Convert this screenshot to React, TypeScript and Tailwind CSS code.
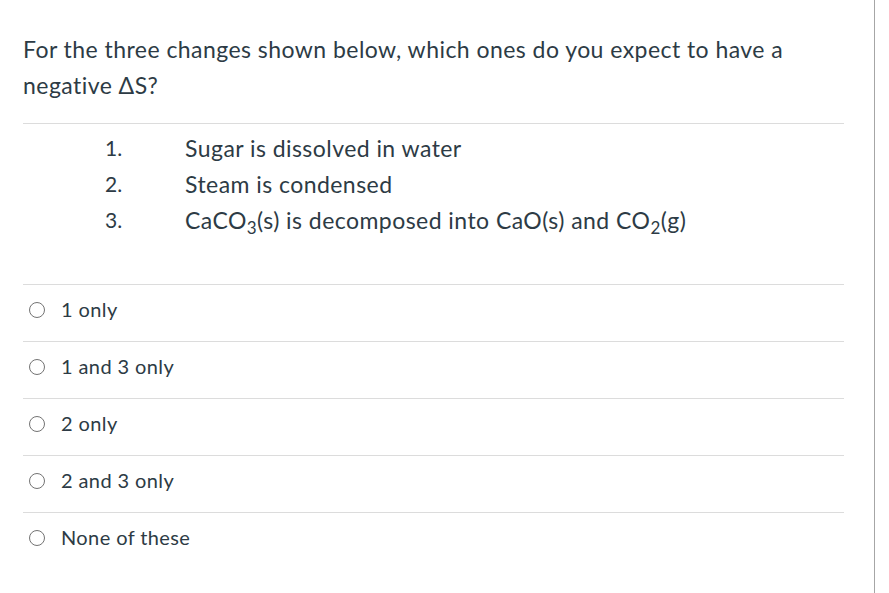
import React from "react";

const options = ["1 only", "1 and 3 only", "2 only", "2 and 3 only", "None of these"];

export default function App() {
  return (
    <div className="flex w-[889px] h-[593px] bg-white font-['Lato','Noto_Sans',sans-serif] text-[#2d3b45]">
      <div className="w-[875px] h-full border-r border-[#a6a6a6] pl-[23px] pr-[30px] pt-[31px]">
        <p className="text-[23px] leading-[36px] tracking-[0.45px]">
          For the three changes shown below, which ones do you expect to have a negative ΔS?
        </p>
        <div className="mt-[20px] border-t border-[#dcdcdc] pt-[6px] pb-[46px] text-[23px] leading-[36px] tracking-[0.45px]">
          <div className="flex">
            <span className="w-[80px] pl-[82px] box-content tracking-normal text-[21px]">1.</span>
            <span>Sugar is dissolved in water</span>
          </div>
          <div className="flex">
            <span className="w-[80px] pl-[82px] box-content tracking-normal text-[21px]">2.</span>
            <span>Steam is condensed</span>
          </div>
          <div className="flex">
            <span className="w-[80px] pl-[82px] box-content tracking-normal text-[21px]">3.</span>
            <span>
              CaCO<sub className="text-[17px] leading-none relative top-[5px] bottom-auto">3</sub>(s) is decomposed into CaO(s) and CO
              <sub className="text-[17px] leading-none relative top-[5px] bottom-auto">2</sub>(g)
            </span>
          </div>
        </div>
        <div>
          {options.map((o) => (
            <div
              key={o}
              className="flex items-start h-[57px] border-t border-[#dcdcdc] pt-[12px] pl-[6px]"
            >
              <span className="mt-[5px] w-[16px] h-[16px] rounded-full border-[1.5px] border-[#737373] shrink-0" />
              <span className="ml-[16px] text-[20px] leading-[24px] tracking-[0.4px]">{o}</span>
            </div>
          ))}
        </div>
      </div>
      <div className="flex-1" />
    </div>
  );
}
